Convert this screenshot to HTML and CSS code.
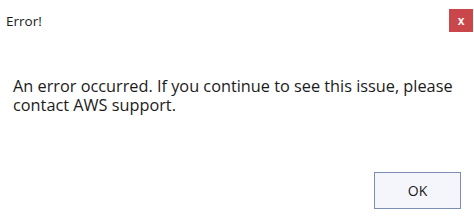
FILE: index.html
```html
<!DOCTYPE html>
<html lang="en">
<head>
    <meta charset="UTF-8">
    <title>Error</title>
    <link rel="stylesheet" href="styles.css">
</head>
<body>
    <div class="dialog">
        <div class="title-bar">
            <span class="title">Error!</span>
            <button class="close-button" aria-label="Close">x</button>
        </div>
        <p class="message">An error occurred. If you continue to see this issue, please contact AWS support.</p>
        <div class="actions">
            <button class="ok-button">OK</button>
        </div>
    </div>
</body>
</html>
```

FILE: styles.css
```css
* {
    margin: 0;
    padding: 0;
    box-sizing: border-box;
}

body {
    background-color: #ffffff;
    color: #1b1b1b;
    font-family: 'Open Sans', 'Noto Sans', sans-serif;
    width: 474px;
    height: 224px;
    overflow: hidden;
}

.dialog {
    display: flex;
    flex-direction: column;
    height: 100%;
}

.title-bar {
    display: flex;
    justify-content: space-between;
    align-items: center;
    padding: 9px 1px 0 6px;
    height: 32px;
}

.title {
    font-size: 13.5px;
}

.close-button {
    width: 24px;
    height: 23px;
    background-color: #c9474a;
    color: #ffffff;
    border: none;
    font-size: 12px;
    font-weight: 700;
    line-height: 20px;
}

.message {
    font-size: 16.3px;
    line-height: 19px;
    padding: 45px 10px 0 13px;
}

.actions {
    display: flex;
    justify-content: flex-end;
    padding: 57px 13px 0 0;
}

.ok-button {
    width: 87px;
    height: 37px;
    background-color: #f5f6fb;
    border: 1px solid #7c8db6;
    color: #1b1b1b;
    font-family: 'Open Sans', 'Noto Sans', sans-serif;
    font-size: 14px;
}
```
